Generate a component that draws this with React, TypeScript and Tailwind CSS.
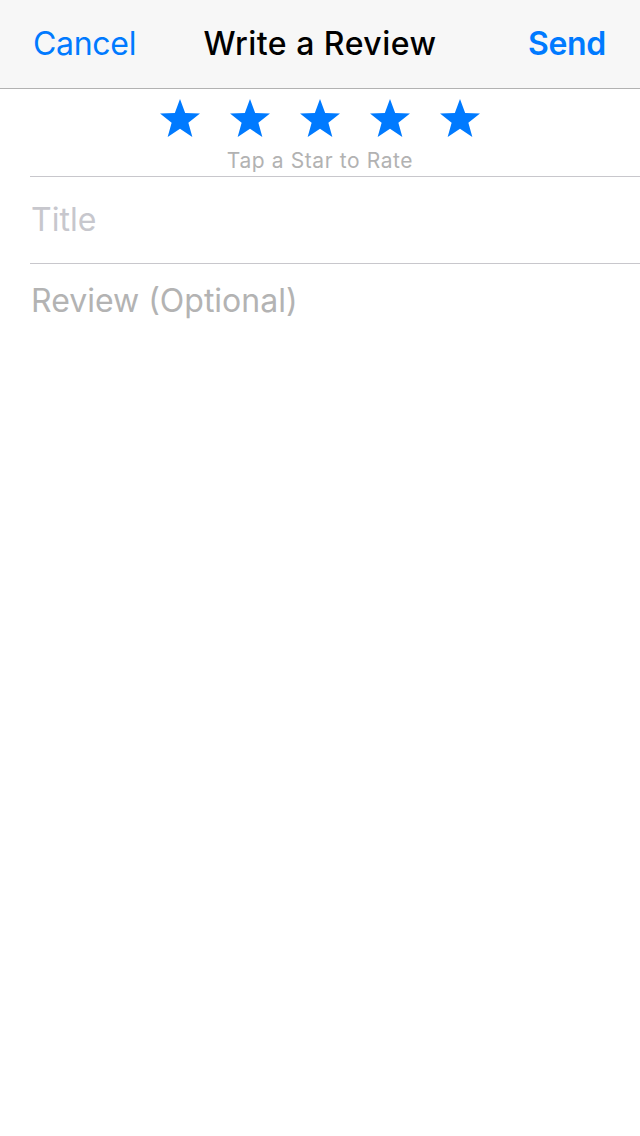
import React from "react";

function Star() {
  return (
    <svg width="40" height="39" viewBox="0 0 40 39" className="block">
      <polygon
        fill="#007aff"
        points="20,0 25.17,13.88 39.97,14.51 28.37,23.72 32.34,37.99 20,29.8 7.66,37.99 11.63,23.72 0.03,14.51 14.83,13.88"
      />
    </svg>
  );
}

export default function App() {
  return (
    <div
      className="w-[640px] h-[1136px] bg-white flex flex-col"
      style={{ fontFamily: "Inter, 'Liberation Sans', sans-serif" }}
    >
      <div className="h-[89px] bg-[#f7f7f7] border-b border-[#b2b2b2] grid grid-cols-[1fr_auto_1fr] items-center px-[33px]">
        <span className="text-[32px] text-[#007aff] tracking-[-0.3px] justify-self-start">Cancel</span>
        <span className="text-[32px] font-medium text-black tracking-[0.5px]">Write a Review</span>
        <span className="text-[32px] font-semibold text-[#007aff] tracking-[-0.3px] justify-self-end mr-[1px]">Send</span>
      </div>
      <div className="h-[87px] flex flex-col items-center pt-[10px]">
        <div className="flex gap-[30px]">
          <Star />
          <Star />
          <Star />
          <Star />
          <Star />
        </div>
        <div className="mt-[11px] text-[21px] leading-[24px] tracking-[0.6px] text-[#b2b2b2]">Tap a Star to Rate</div>
      </div>
      <div className="ml-[30px] h-px bg-[#c8c7cc]" />
      <div className="h-[86px] flex items-center pl-[31px] text-[32px] text-[#c7c7cd]">Title</div>
      <div className="ml-[30px] h-px bg-[#c8c7cc]" />
      <div className="pl-[31px] pt-[17px] text-[32px] leading-[40px] text-[#b3b3b3]">Review (Optional)</div>
    </div>
  );
}
